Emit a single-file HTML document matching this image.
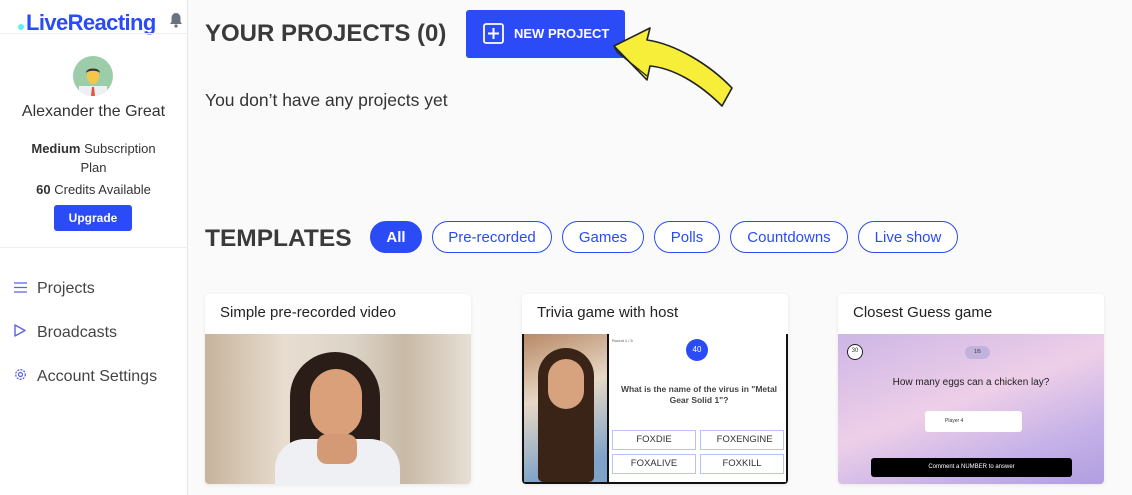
<!DOCTYPE html>
<html><head><meta charset="utf-8"><style>
*{box-sizing:border-box;margin:0;padding:0}
body{width:1132px;height:495px;overflow:hidden;background:#fafafa;font-family:"Liberation Sans",sans-serif;color:#333;position:relative}
.side{position:absolute;left:0;top:0;width:188px;height:495px;background:#fff;border-right:1px solid #e6e6e6}
.abs{position:absolute}
.logo{left:18px;top:10px;font-size:22px;font-weight:bold;color:#2a4bf5;letter-spacing:-0.6px}
.logo .dot{display:inline-block;width:6px;height:6px;border-radius:3px;background:#5ef0f5;margin-right:2px}
.c{text-align:center;width:187px;left:0}
.pill{position:absolute;top:221px;height:32px;border:1.5px solid #2a4bf5;border-radius:16px;color:#2a4bf5;font-size:15px;line-height:31px;text-align:center;background:#fff}
.card{position:absolute;top:294px;width:266px;height:190px;background:#fff;box-shadow:0 1px 4px rgba(0,0,0,.08);border-radius:4px;overflow:hidden}
.card .h{height:40px;padding-left:15px;line-height:38px;font-size:15px;color:#222}
.card .im{position:absolute;top:40px;left:0;width:266px;height:150px}
.nav{left:14px;font-size:16px;color:#444}
.nav span{display:inline-block;width:23px}
</style></head><body>
<div class="side">
<div class="abs logo"><span class="dot"></span>LiveReacting</div>
<svg class="abs" style="left:169px;top:12px" width="14" height="16" viewBox="0 0 14 16"><path d="M7 1c-3 0-4.5 2.5-4.5 5v4L1 12h12l-1.5-2V6C11.5 3.5 10 1 7 1z" fill="#6a7380"/><circle cx="7" cy="14" r="1.6" fill="#6a7380"/></svg>
<div class="abs" style="left:0;top:33px;width:187px;border-top:1px solid #eee"></div>
<svg class="abs" style="left:73px;top:56px" width="40" height="40" viewBox="0 0 40 40"><circle cx="20" cy="20" r="20" fill="#9ccca8"/><clipPath id="cp"><circle cx="20" cy="20" r="20"/></clipPath><g clip-path="url(#cp)"><rect x="6" y="30" width="28" height="12" fill="#eef0f3"/><path d="M19 31h2l1 9h-4z" fill="#e0533f"/><ellipse cx="20" cy="20" rx="6" ry="8" fill="#f6c747"/><path d="M13 17c0-6 14-6 14 0c-2-3-12-3-14 0z" fill="#2d3440"/></g></svg>
<div class="abs c" style="top:103px;font-size:16px;color:#333">Alexander the Great</div>
<div class="abs c" style="top:139px;font-size:13px;line-height:19px;color:#333;padding:0 28px"><b>Medium</b> Subscription Plan</div>
<div class="abs c" style="top:182px;font-size:13px;color:#333"><b>60</b> Credits Available</div>
<div class="abs" style="left:54px;top:205px;width:78px;height:26px;background:#2a4bf5;border-radius:3px;color:#fff;font-size:12px;font-weight:bold;text-align:center;line-height:26px">Upgrade</div>
<div class="abs" style="left:0;top:247px;width:187px;border-top:1px solid #eee"></div>
<div class="abs nav" style="top:280px"><span><svg width="13" height="11"><path d="M0 1h13M0 5.5h13M0 10h13" stroke="#5b62e8" stroke-width="1.3"/></svg></span>Projects</div>
<div class="abs nav" style="top:324px"><span><svg width="12" height="13"><path d="M1 1l10 5.5L1 12z" fill="none" stroke="#5b62e8" stroke-width="1.4" stroke-linejoin="round"/></svg></span>Broadcasts</div>
<div class="abs nav" style="top:368px"><span><svg width="13" height="13" viewBox="0 0 13 13"><circle cx="6.5" cy="6.5" r="4.8" fill="none" stroke="#5b62e8" stroke-width="1.3" stroke-dasharray="2 1.2"/><circle cx="6.5" cy="6.5" r="2" fill="none" stroke="#5b62e8" stroke-width="1.2"/></svg></span>Account Settings</div>
</div>

<div class="abs" style="left:205px;top:20px;font-size:24px;font-weight:bold;color:#3a3a3a">YOUR PROJECTS (0)</div>
<div class="abs" style="left:466px;top:10px;width:159px;height:48px;background:#2a4bf5;border-radius:3px;color:#fff;font-size:13px;font-weight:bold;line-height:48px;padding-left:48px">NEW PROJECT</div>
<svg class="abs" style="left:483px;top:23px" width="21" height="21"><rect x="1" y="1" width="19" height="19" rx="2" fill="none" stroke="#fff" stroke-width="1.8"/><path d="M10.5 5v11M5 10.5h11" stroke="#fff" stroke-width="2"/></svg>
<svg class="abs" style="left:610px;top:24px" width="145" height="85" viewBox="0 0 145 85"><path d="M4 22L40 4l-3 12c28 4 62 24 85 48l-10 18c-24-24-50-38-72-40l-3 14z" fill="#f7ee3a" stroke="#222" stroke-width="1.6" stroke-linejoin="round"/><path d="M4 22l3 6 30 24" fill="none" stroke="#222" stroke-width="1.2"/></svg>
<div class="abs" style="left:205px;top:90px;font-size:17.5px;color:#333">You don’t have any projects yet</div>

<div class="abs" style="left:205px;top:225px;font-size:24.5px;font-weight:bold;color:#3a3a3a">TEMPLATES</div>
<div class="pill" style="left:370px;width:52px;background:#2a4bf5;color:#fff;font-weight:bold">All</div>
<div class="pill" style="left:432px;width:120px">Pre-recorded</div>
<div class="pill" style="left:562px;width:82px">Games</div>
<div class="pill" style="left:654px;width:66px">Polls</div>
<div class="pill" style="left:730px;width:118px">Countdowns</div>
<div class="pill" style="left:858px;width:100px">Live show</div>

<div class="card" style="left:205px"><div class="h">Simple pre-recorded video</div>
<div class="im" style="background:linear-gradient(90deg,#c7b39c 0%,#e8ddd0 30%,#ddd4c8 55%,#c8b9a6 75%,#e7e0d6 100%)">
<div class="abs" style="left:85px;top:18px;width:90px;height:132px;border-radius:45px 45px 10px 10px;background:#2a1d17"></div>
<div class="abs" style="left:105px;top:35px;width:52px;height:68px;border-radius:26px;background:#d9a07a"></div>
<div class="abs" style="left:70px;top:105px;width:125px;height:45px;border-radius:30px 30px 0 0;background:#eef0f4"></div>
<div class="abs" style="left:112px;top:100px;width:40px;height:30px;border-radius:10px;background:#d39a75"></div>
</div></div>

<div class="card" style="left:522px"><div class="h">Trivia game with host</div>
<div class="im" style="background:#fff;border:2px solid #111;border-top:none">
<div class="abs" style="left:0;top:0;width:83px;height:148px;background:linear-gradient(160deg,#b88966,#e7d8c6 40%,#7fa3c8 85%)"></div>
<div class="abs" style="left:14px;top:14px;width:56px;height:134px;border-radius:28px 28px 5px 5px;background:#3a2418"></div>
<div class="abs" style="left:24px;top:25px;width:36px;height:50px;border-radius:18px;background:#d7a27e"></div>
<div class="abs" style="left:83px;top:0;width:2px;height:148px;background:#111"></div>
<div class="abs" style="left:88px;top:4px;font-size:4px;color:#555">Round 1 / 5</div>
<div class="abs" style="left:162px;top:5px;width:22px;height:22px;border-radius:11px;background:#2a4bf5;color:#fff;font-size:8px;text-align:center;line-height:22px">40</div>
<div class="abs" style="left:88px;top:50px;width:174px;text-align:center;font-size:8.5px;font-weight:bold;color:#444;line-height:11px">What is the name of the virus in "Metal Gear Solid 1"?</div>
<div class="abs" style="left:88px;top:96px;width:84px;height:20px;border:1px solid #b8c0ff;font-size:9.5px;line-height:18px;text-align:center;color:#333">FOXDIE</div>
<div class="abs" style="left:176px;top:96px;width:84px;height:20px;border:1px solid #b8c0ff;font-size:9.5px;line-height:18px;text-align:center;color:#333">&nbsp;&nbsp;FOXENGINE</div>
<div class="abs" style="left:88px;top:120px;width:84px;height:20px;border:1px solid #b8c0ff;font-size:9.5px;line-height:18px;text-align:center;color:#333">FOXALIVE</div>
<div class="abs" style="left:176px;top:120px;width:84px;height:20px;border:1px solid #b8c0ff;font-size:9.5px;line-height:18px;text-align:center;color:#333">FOXKILL</div>
</div></div>

<div class="card" style="left:838px"><div class="h">Closest Guess game</div>
<div class="im" style="background:linear-gradient(160deg,#cdb6e6 0%,#eecfe8 45%,#c6b2e8 75%,#b09ee0 100%)">
<div class="abs" style="left:9px;top:10px;width:16px;height:16px;border-radius:8px;border:1.5px solid #222;background:#fff;font-size:6px;text-align:center;line-height:13px">30</div>
<div class="abs" style="left:127px;top:12px;width:25px;height:13px;border-radius:7px;background:#c2b3dc;font-size:5px;text-align:center;line-height:13px">1/5</div>
<div class="abs" style="left:0;top:43px;width:266px;text-align:center;font-size:10px;color:#222">How many eggs can a chicken lay?</div>
<div class="abs" style="left:87px;top:77px;width:97px;height:21px;background:#fff;border-radius:3px;font-size:5px;line-height:21px;padding-left:20px">Player 4</div>
<div class="abs" style="left:33px;top:124px;width:201px;height:19px;background:#000;border-radius:3px;color:#fff;font-size:6px;text-align:center;line-height:19px">Comment a NUMBER to answer</div>
</div></div>
</body></html>
